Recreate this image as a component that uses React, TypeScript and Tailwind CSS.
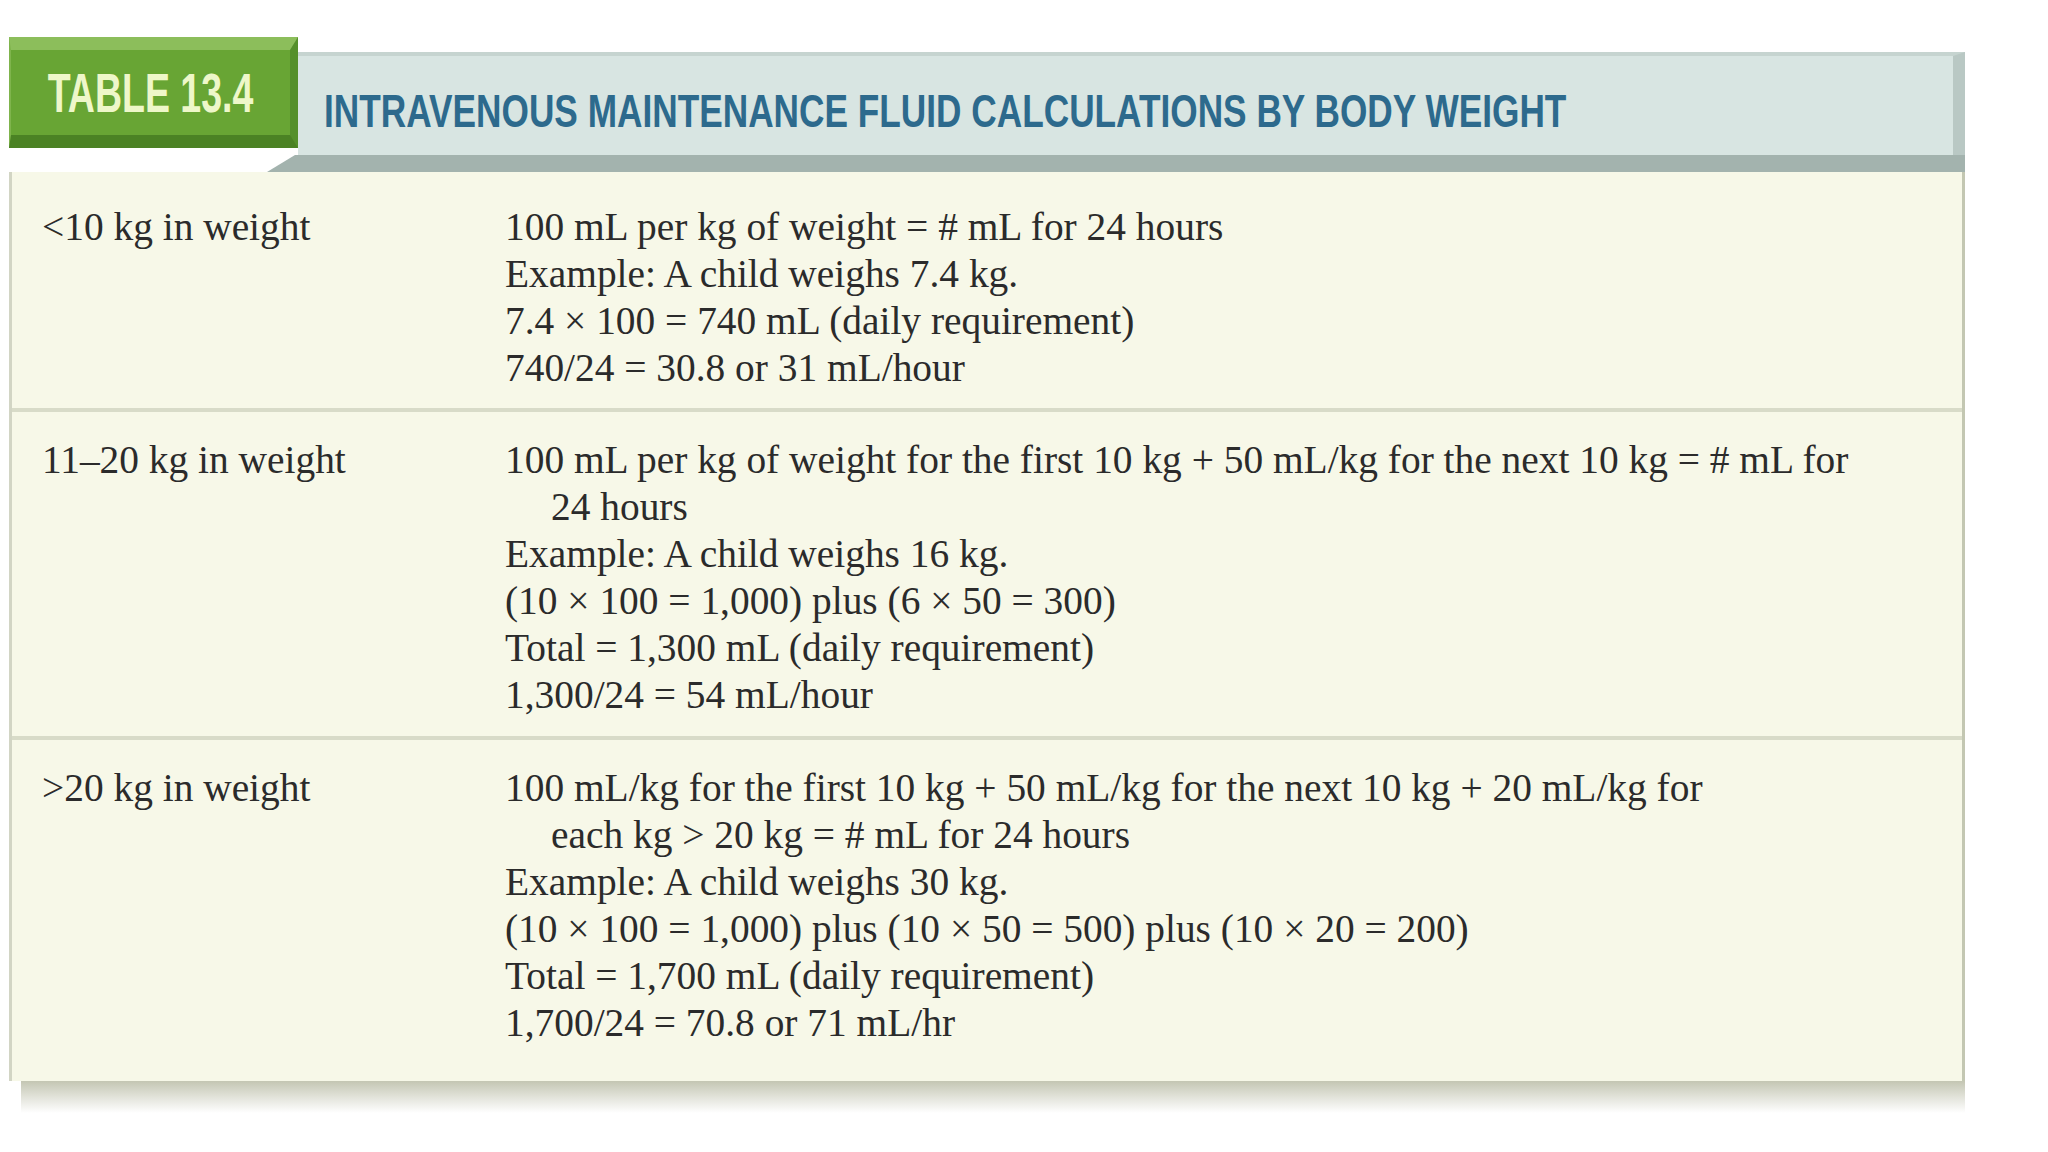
import React from 'react';

type Row = {
    weight: string;
    lines: { text: string; indent?: boolean }[];
};

const rows: Row[] = [
    {
        weight: '<10 kg in weight',
        lines: [
            {text: '100 mL per kg of weight = # mL for 24 hours'},
            {text: 'Example: A child weighs 7.4 kg.'},
            {text: '7.4 × 100 = 740 mL (daily requirement)'},
            {text: '740/24 = 30.8 or 31 mL/hour'},
        ],
    },
    {
        weight: '11–20 kg in weight',
        lines: [
            {text: '100 mL per kg of weight for the first 10 kg + 50 mL/kg for the next 10 kg = # mL for'},
            {text: '24 hours', indent: true},
            {text: 'Example: A child weighs 16 kg.'},
            {text: '(10 × 100 = 1,000) plus (6 × 50 = 300)'},
            {text: 'Total = 1,300 mL (daily requirement)'},
            {text: '1,300/24 = 54 mL/hour'},
        ],
    },
    {
        weight: '>20 kg in weight',
        lines: [
            {text: '100 mL/kg for the first 10 kg + 50 mL/kg for the next 10 kg + 20 mL/kg for'},
            {text: 'each kg > 20 kg = # mL for 24 hours', indent: true},
            {text: 'Example: A child weighs 30 kg.'},
            {text: '(10 × 100 = 1,000) plus (10 × 50 = 500) plus (10 × 20 = 200)'},
            {text: 'Total = 1,700 mL (daily requirement)'},
            {text: '1,700/24 = 70.8 or 71 mL/hr'},
        ],
    },
];

// padding per row: first row sits a little lower under the header stripe
const rowPad = [
    'pt-[32px] pb-[16px] border-b-4 border-b-[#d8dbc8]',
    'pt-[25px] pb-[17px] border-b-4 border-b-[#d8dbc8]',
    'pt-[25px] pb-[34px]',
];

const sansFont = {fontFamily: '"Liberation Sans", Arial, sans-serif'};

const App = () => {
    return (
        <div className="min-h-screen w-full bg-white">
            <div className="w-[1956px] ml-[9px] pt-[37px]">
                {/* Header */}
                <div className="flex">
                    <div
                        className="w-[289px] h-[111px] shrink-0 flex items-center justify-center bg-[#68a534] border-t-[13px] border-t-[#8cbe5b] border-b-[13px] border-b-[#4b8224] border-r-[8px] border-r-[#55902b] border-l-[2px] border-l-[#7fb44c]">
                        {/* condensed look: no narrow face installed, so squeeze horizontally */}
                        <span
                            className="inline-block whitespace-nowrap text-[#eef7c9] font-bold text-[56px] leading-none scale-x-[0.67] origin-center"
                            style={sansFont}>
                            TABLE 13.4
                        </span>
                    </div>
                    <div className="flex-1 flex flex-col pt-[15px]">
                        <div
                            className="h-[103px] flex items-center pl-[26px] pt-[10px] bg-[#d8e5e2] border-t-[4px] border-t-[#c6d4d0] border-r-[12px] border-r-[#b9c8c4] overflow-hidden">
                            <span
                                className="inline-block whitespace-nowrap text-[#2d6a8d] font-bold text-[46px] leading-none scale-x-[0.766] origin-left"
                                style={sansFont}>
                                INTRAVENOUS MAINTENANCE FLUID CALCULATIONS BY BODY WEIGHT
                            </span>
                        </div>
                        <div
                            className="h-[17px] -ml-[31px] bg-[#a3b3ae] [clip-path:polygon(28px_0,100%_0,100%_100%,0_100%)]"/>
                    </div>
                </div>

                {/* Body */}
                <div
                    className="bg-[#f7f8e8] border-l-[3px] border-l-[#d2d5c4] border-r-[3px] border-r-[#c3c7b2] text-[#2b2b2b] text-[39.4px] leading-[47px]"
                    style={{fontFamily: '"Liberation Serif", "Times New Roman", serif'}}>
                    {rows.map((row, i) => (
                        <div key={i} className={`grid grid-cols-[463px_1fr] pl-[30px] ${rowPad[i]}`}>
                            <div className="whitespace-nowrap">{row.weight}</div>
                            <div>
                                {row.lines.map((line, j) => (
                                    <div key={j} className={`whitespace-nowrap ${line.indent ? 'pl-[46px]' : ''}`}>
                                        {line.text}
                                    </div>
                                ))}
                            </div>
                        </div>
                    ))}
                </div>
                {/* bottom shadow */}
                <div className="h-[32px] ml-[12px] bg-gradient-to-b from-[#c4c6b3] via-[#e2e3da] to-white"/>
            </div>
        </div>
    );
};

export default App;
